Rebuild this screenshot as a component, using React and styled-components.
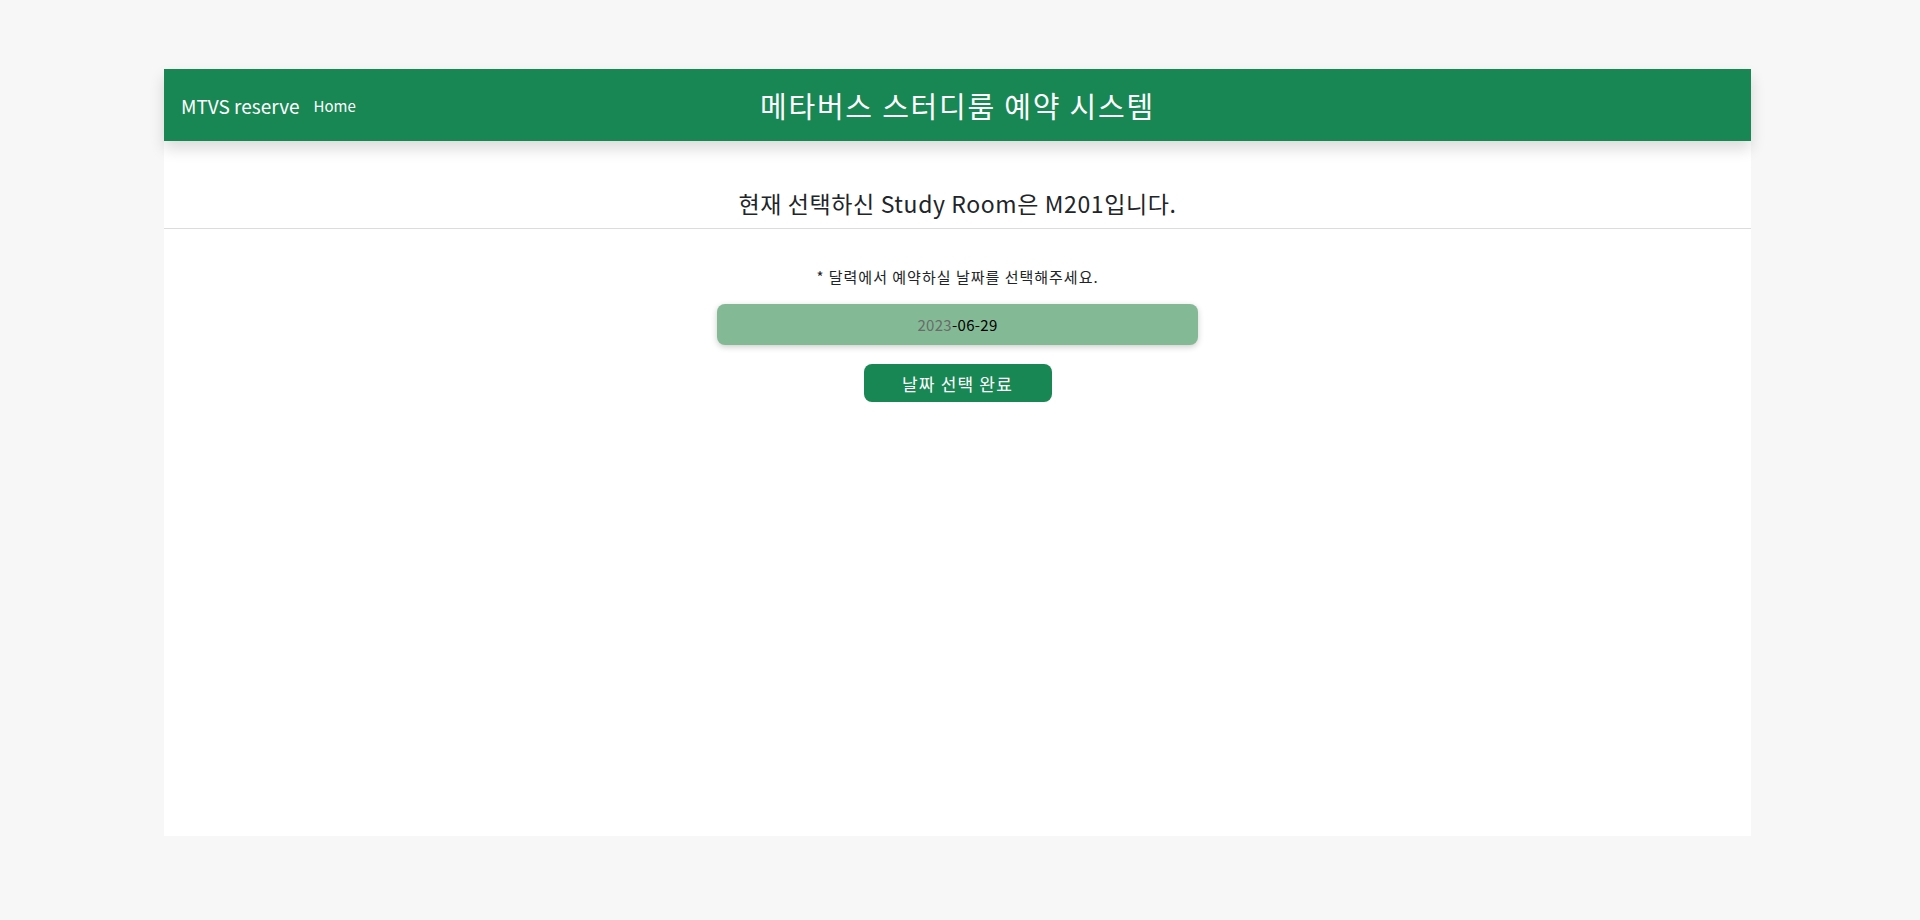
import React from "react";
import styled, { createGlobalStyle } from "styled-components";

const GlobalStyle = createGlobalStyle`
  body {
    margin: 0;
    background: #f7f7f7;
    font-family: "Noto Sans CJK KR", "Noto Sans", sans-serif;
  }
`;

function App() {
  return (
    <>
      <GlobalStyle />
      <Page>
        <Card>
          <Header>
            <Nav>
              <Brand>MTVS reserve</Brand>
              <NavLink>Home</NavLink>
            </Nav>
            <HeaderTitle>메타버스 스터디룸 예약 시스템</HeaderTitle>
            <div />
          </Header>

          <Main>
            <RoomTitle>현재 선택하신 Study Room은 M201입니다.</RoomTitle>
            <Picker>
              <Hint>* 달력에서 예약하실 날짜를 선택해주세요.</Hint>
              <DateBox>
                <Year>2023</Year>-06-29
              </DateBox>
              <SubmitButton>날짜 선택 완료</SubmitButton>
            </Picker>
          </Main>
        </Card>
      </Page>
    </>
  );
}

export default App;

const Page = styled.div`
  padding: 69px 169px 84px 164px;
`;

const Card = styled.div`
  background: #fff;
  height: 767px;
  display: flex;
  flex-direction: column;
`;

const Header = styled.header`
  height: 72px;
  background: #198754;
  color: #fff;
  display: grid;
  grid-template-columns: 1fr auto 1fr;
  align-items: center;
  padding: 0 17px;
  box-shadow: 0 8px 14px rgba(0, 0, 0, 0.14);
  position: relative;
  z-index: 1;
`;

const Nav = styled.nav`
  display: flex;
  align-items: center;
  gap: 14px;
`;

const Brand = styled.span`
  font-size: 19px;
`;

const NavLink = styled.span`
  font-size: 15px;
`;

const HeaderTitle = styled.h1`
  margin: 0;
  font-size: 29px;
  font-weight: 400;
  letter-spacing: 1.8px;
`;

const Main = styled.main`
  padding-top: 44px;
  display: flex;
  flex-direction: column;
`;

const RoomTitle = styled.h2`
  margin: 0;
  padding-bottom: 7px;
  font-size: 23px;
  line-height: 36px;
  font-weight: 400;
  letter-spacing: 0.6px;
  color: #212529;
  text-align: center;
  border-bottom: 1px solid #dcdcdc;
`;

const Picker = styled.section`
  padding-top: 37px;
  display: flex;
  flex-direction: column;
  align-items: center;
`;

const Hint = styled.p`
  margin: 0 0 16px;
  font-size: 15px;
  line-height: 22px;
  letter-spacing: 1px;
  color: #212529;
`;

const DateBox = styled.div`
  width: 481px;
  height: 41px;
  border-radius: 8px;
  background: #83ba95;
  box-shadow: 0 2px 6px rgba(0, 0, 0, 0.2);
  display: flex;
  align-items: center;
  justify-content: center;
  font-size: 15px;
  letter-spacing: 0.3px;
  color: #000;
`;

const Year = styled.span`
  color: #6b6b6b;
`;

const SubmitButton = styled.button`
  margin-top: 19px;
  width: 188px;
  height: 38px;
  border: none;
  border-radius: 8px;
  background: #198754;
  color: #fff;
  font-family: inherit;
  font-size: 17px;
  letter-spacing: 1.2px;
`;
